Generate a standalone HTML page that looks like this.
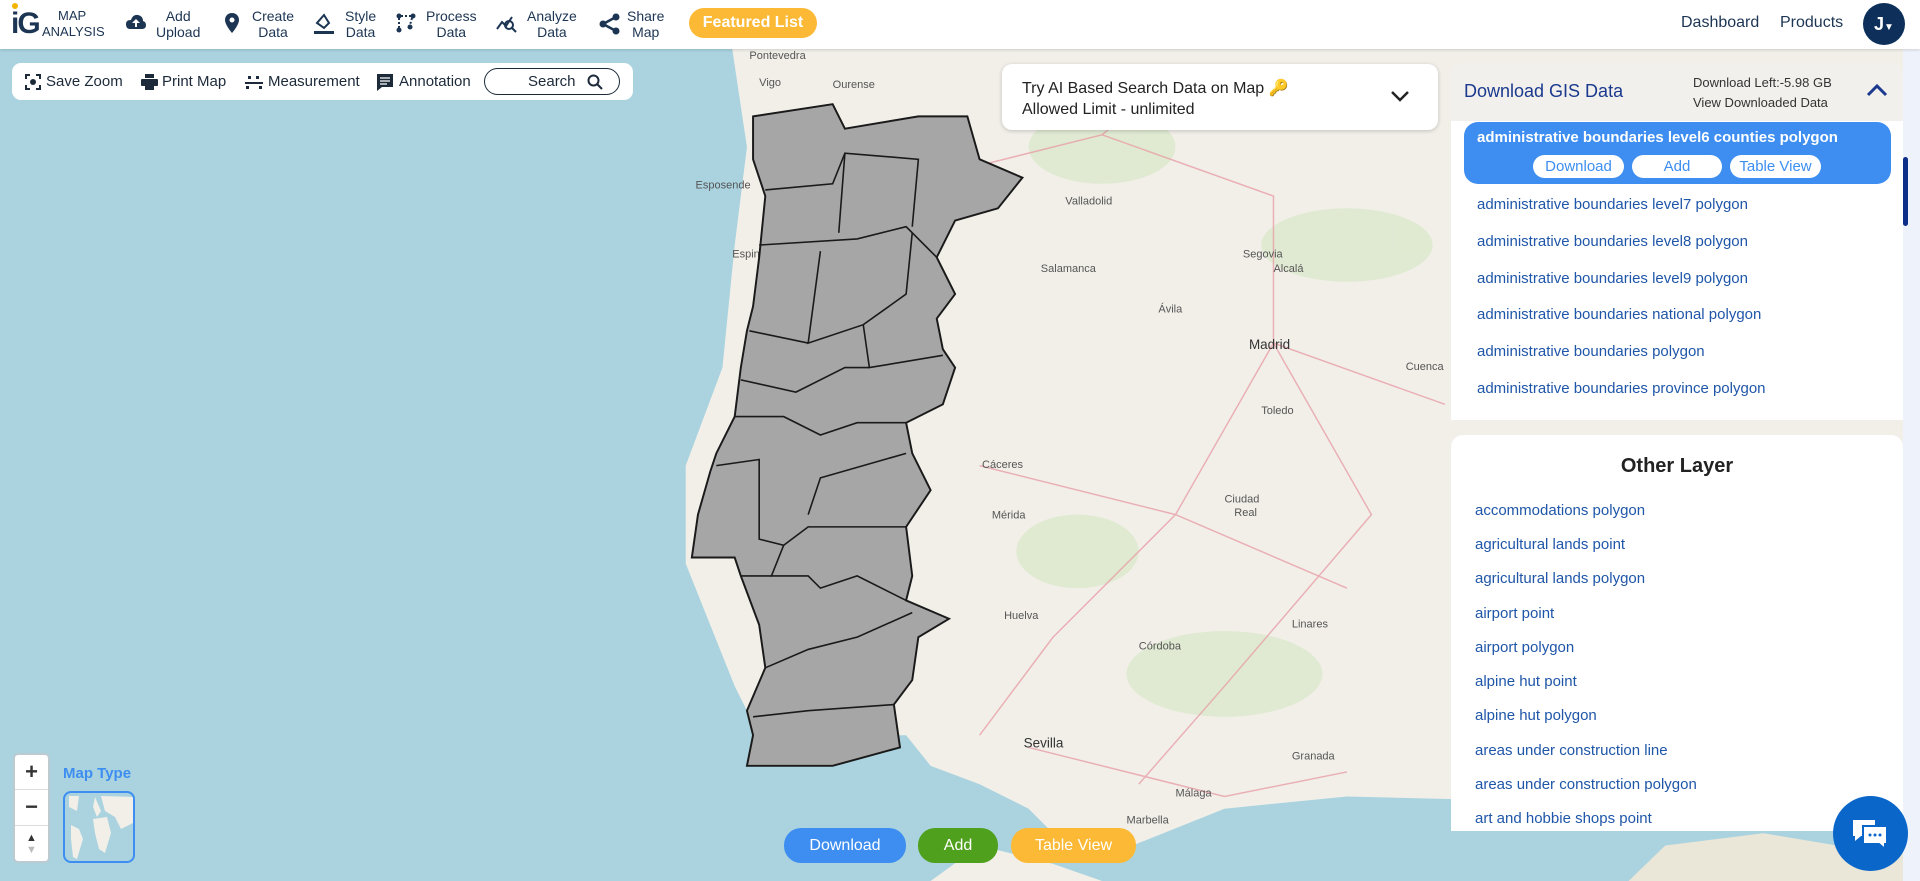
<!DOCTYPE html>
<html><head><meta charset="utf-8"><style>
*{margin:0;padding:0;box-sizing:border-box}
body{width:1920px;height:881px;overflow:hidden;position:relative;font-family:"Liberation Sans",sans-serif;background:#aad3df}
.abs{position:absolute}
#top{left:0;top:0;width:1920px;height:49px;background:#fff;box-shadow:0 1px 3px rgba(0,0,0,.15);z-index:5}
.nav{position:absolute;top:8px;font-size:14px;color:#1c3553;text-align:center;line-height:16px}
.ico{position:absolute;top:13px}
#feat{left:689px;top:8px;width:128px;height:30px;border-radius:15px;background:#fbb935;color:#fff;font-weight:bold;font-size:16px;line-height:30px;text-align:center}
#tools{left:12px;top:63px;width:621px;height:37px;background:#fff;border-radius:9px;font-size:15px;color:#1c2a3a}
#tools span{position:absolute;top:10px}
#ai{left:1002px;top:64px;width:436px;height:66px;background:#fff;border-radius:10px;box-shadow:0 1px 4px rgba(0,0,0,.2);font-size:16px;color:#222;padding:14px 20px;line-height:21px}
#dl{left:1451px;top:63px;width:452px;height:357px;background:#fff;border-radius:12px 12px 0 0}
#dlh{left:0;top:0;width:452px;height:58px;background:#f1f0ec;border-radius:12px 12px 0 0}
.it{position:absolute;left:26px;font-size:15px;color:#1f56a8}
#ol{left:1451px;top:435px;width:452px;height:396px;background:#fff;border-radius:12px 12px 0 0}
.ot{position:absolute;left:24px;font-size:15px;color:#1f56a8}
.bb{position:absolute;top:828px;height:35px;border-radius:17px;color:#fff;font-size:16px;line-height:35px;text-align:center}
</style></head><body>
<svg class="abs" style="left:0;top:0" width="1920" height="881" viewBox="0 0 1568 719" preserveAspectRatio="none">
<rect width="1568" height="719" fill="#aad3df"/>
<path d="M598 40 L1568 40 L1568 640 L1450 650 L1300 655 L1100 650 L1000 660 L950 680 L900 700 L870 690 L840 660 L800 640 L760 625 L740 600 L620 600 L600 560 L560 460 L560 380 L590 300 L600 200 L610 120 Z" fill="#f2efe9"/>
<path d="M760 719 L800 690 L860 705 L900 719 Z" fill="#f2efe9"/>
<path d="M1330 719 L1360 690 L1440 680 L1500 690 L1568 680 L1568 719Z" fill="#eae6d8"/>
<g fill="#d8e8c8" opacity=".7"><ellipse cx="900" cy="120" rx="60" ry="30"/><ellipse cx="1100" cy="200" rx="70" ry="30"/><ellipse cx="1000" cy="550" rx="80" ry="35"/><ellipse cx="1250" cy="120" rx="60" ry="25"/><ellipse cx="880" cy="450" rx="50" ry="30"/></g>
<g stroke="#e8a0a8" stroke-width="1.2" fill="none" opacity=".8"><path d="M780 140 L900 110 L1040 160 L1040 280 L1180 330"/><path d="M1040 280 L960 420 L860 520 L800 600"/><path d="M1040 280 L1120 420 L1000 560 L930 640"/><path d="M800 380 L960 420 L1100 480"/><path d="M900 110 L960 60 L1100 60"/><path d="M840 610 L1000 650 L1100 630"/></g>
<g font-size="9" fill="#555" font-family="Liberation Sans"><text x="612" y="48">Pontevedra</text><text x="620" y="70">Vigo</text><text x="680" y="72">Ourense</text><text x="568" y="154">Esposende</text><text x="598" y="210">Espinho</text><text x="870" y="167">Valladolid</text><text x="1015" y="210">Segovia</text><text x="1020" y="285" font-size="11" fill="#333">Madrid</text><text x="850" y="222">Salamanca</text><text x="946" y="255">Ávila</text><text x="1030" y="338">Toledo</text><text x="802" y="382">Cáceres</text><text x="810" y="423">Mérida</text><text x="1000" y="410">Ciudad</text><text x="1008" y="421">Real</text><text x="1055" y="512">Linares</text><text x="930" y="530">Córdoba</text><text x="836" y="610" font-size="11" fill="#333">Sevilla</text><text x="1055" y="620">Granada</text><text x="960" y="650">Málaga</text><text x="920" y="672">Marbella</text><text x="1148" y="302">Cuenca</text><text x="1040" y="222">Alcalá</text><text x="820" y="505">Huelva</text></g>
<path d="M615 95 L680 85 L690 105 L750 95 L790 95 L800 130 L835 145 L815 170 L780 180 L765 210 L780 240 L765 260 L770 285 L780 300 L770 330 L740 345 L745 370 L760 400 L740 430 L745 470 L740 490 L775 505 L750 520 L745 555 L730 575 L735 610 L680 625 L610 625 L615 600 L610 580 L625 545 L620 510 L605 470 L600 455 L565 455 L570 420 L580 385 L585 370 L600 340 L605 300 L610 270 L615 250 L620 210 L625 160 L615 130 Z" fill="#a6a6a6" stroke="#1a1a1a" stroke-width="1.6"/>
<g stroke="#1a1a1a" stroke-width="1.3" fill="none"><path d="M625 155 L680 150 L690 125 L750 130 L745 185"/><path d="M620 200 L700 195 L740 185 L765 210"/><path d="M690 125 L685 190"/><path d="M670 205 L660 280 L705 265 L740 240 L745 190"/><path d="M612 270 L660 280"/><path d="M705 265 L710 300 L770 290"/><path d="M605 310 L650 320 L690 300 L710 300"/><path d="M600 340 L640 340 L670 355 L700 345 L740 345"/><path d="M585 380 L620 375 L620 440 L640 445 L660 430 L700 430 L740 430"/><path d="M660 420 L670 390 L740 370"/><path d="M640 445 L630 470 L660 470 L670 480 L700 470 L740 490"/><path d="M605 470 L630 470"/><path d="M625 545 L660 530 L700 520 L745 500"/><path d="M615 585 L660 580 L730 575"/></g>
</svg>
<div class="abs" style="left:1903px;top:49px;width:17px;height:832px;background:#eef3fb"></div>
<div class="abs" id="top">
<div class="abs" style="left:11px;top:7px;font-size:30px;font-weight:bold;color:#1c3553;font-family:'Liberation Sans Narrow','Liberation Sans',sans-serif;line-height:34px;letter-spacing:-2px">iG</div>
<div class="abs" style="left:12px;top:3px;width:6px;height:6px;border-radius:3px;background:#f4b400"></div>
<div class="nav" style="left:42px;text-align:left;font-size:13px;line-height:16px"><span style="padding-left:16px">MAP</span><br>ANALYSIS</div>
<svg class="ico" style="left:126px" width="20" height="18"><path d="M4 16 Q0 16 0 11 Q0 7 5 7 Q7 1 12 2 Q17 3 17 8 Q20 9 20 12 Q20 16 16 16Z" fill="#1c3553"/><path d="M10 6 L6 10 H9 V14 H11 V10 H14Z" fill="#fff"/></svg>
<div class="nav" style="left:156px">Add<br>Upload</div>
<svg class="ico" style="left:225px" width="14" height="20"><path d="M7 0 C3 0 0 3 0 7 C0 12 7 20 7 20 C7 20 14 12 14 7 C14 3 11 0 7 0Z" fill="#1c3553"/><circle cx="7" cy="7" r="2.5" fill="#fff"/></svg>
<div class="nav" style="left:252px">Create<br>Data</div>
<svg class="ico" style="left:313px" width="22" height="22"><path d="M11 2 L4 10 L11 15 L16 10Z" fill="none" stroke="#1c3553" stroke-width="2"/><rect x="1" y="18" width="20" height="3" fill="#1c3553"/></svg>
<div class="nav" style="left:345px">Style<br>Data</div>
<svg class="ico" style="left:396px" width="20" height="20" fill="#1c3553"><circle cx="3" cy="3" r="2.5"/><circle cx="17" cy="3" r="2.5"/><circle cx="3" cy="17" r="2.5"/><circle cx="14" cy="14" r="2.5"/><path d="M3 5 V15 M5 3 H15 M16 5 L14 12" stroke="#1c3553" stroke-width="2" stroke-dasharray="2 2"/></svg>
<div class="nav" style="left:426px">Process<br>Data</div>
<svg class="ico" style="left:496px" width="22" height="20"><path d="M1 16 L6 9 L10 13 L16 4" fill="none" stroke="#1c3553" stroke-width="2"/><circle cx="13" cy="12" r="4" fill="none" stroke="#1c3553" stroke-width="2"/><path d="M16 15 L20 19" stroke="#1c3553" stroke-width="2"/></svg>
<div class="nav" style="left:527px">Analyze<br>Data</div>
<svg class="ico" style="left:599px" width="22" height="22" fill="#1c3553"><circle cx="17" cy="4" r="3.5"/><circle cx="4" cy="11" r="3.5"/><circle cx="17" cy="18" r="3.5"/><path d="M17 4 L4 11 L17 18" stroke="#1c3553" stroke-width="2.5" fill="none"/></svg>
<div class="nav" style="left:627px">Share<br>Map</div>
<div class="abs" id="feat">Featured List</div>
<div class="abs" style="left:1681px;top:14px;font-size:16px;color:#1c3553">Dashboard</div>
<div class="abs" style="left:1780px;top:14px;font-size:16px;color:#1c3553">Products</div>
<div class="abs" style="left:1863px;top:3px;width:42px;height:42px;border-radius:21px;background:#0d2f5a;color:#fff;font-size:18px;font-weight:bold;line-height:42px;padding-left:11px">J<span style="font-size:10px">▼</span></div>
</div>
<div class="abs" id="tools">
<svg class="abs" style="left:13px;top:11px" width="16" height="16"><path d="M1 5V1H5M11 1H15V5M15 11V15H11M5 15H1V11" stroke="#1c2a3a" stroke-width="2" fill="none"/><circle cx="8" cy="8" r="3" fill="#1c2a3a"/></svg>
<span style="left:34px">Save Zoom</span>
<svg class="abs" style="left:129px;top:11px" width="17" height="16" fill="#1c2a3a"><rect x="4" y="0" width="9" height="4"/><rect x="0" y="5" width="17" height="7" rx="1"/><rect x="4" y="10" width="9" height="6"/></svg>
<span style="left:150px">Print Map</span>
<svg class="abs" style="left:233px;top:11px" width="18" height="16" fill="#1c2a3a"><rect x="3" y="2" width="3" height="3"/><rect x="11" y="2" width="3" height="3"/><rect x="0" y="8" width="18" height="2"/><rect x="1" y="12" width="3" height="3"/><rect x="14" y="12" width="3" height="3"/></svg>
<span style="left:256px">Measurement</span>
<svg class="abs" style="left:365px;top:11px" width="16" height="17" fill="#1c2a3a"><path d="M0 0H16V13H5L0 17Z"/><path d="M3 4H13M3 7H13M3 10H10" stroke="#fff" stroke-width="1.3"/></svg>
<span style="left:387px">Annotation</span>
<div class="abs" style="left:472px;top:5px;width:136px;height:27px;border:1.5px solid #1c2a3a;border-radius:14px"><span style="left:43px;top:4px">Search</span><svg class="abs" style="left:102px;top:5px" width="16" height="16"><circle cx="6.5" cy="6.5" r="5" stroke="#1c2a3a" stroke-width="2" fill="none"/><path d="M10 10L15 15" stroke="#1c2a3a" stroke-width="2"/></svg></div>
</div>
<div class="abs" id="ai">Try AI Based Search Data on Map <span style="color:#e8c040">🔑</span><br>Allowed Limit - unlimited
<svg class="abs" style="left:388px;top:26px" width="20" height="12"><path d="M2 2L10 10L18 2" stroke="#222" stroke-width="2.5" fill="none"/></svg></div>
<div class="abs" id="dl">
<div class="abs" id="dlh"></div>
<div class="abs" style="left:13px;top:18px;font-size:18px;color:#1b3a8f">Download GIS Data</div>
<div class="abs" style="left:242px;top:10px;font-size:13px;color:#333;line-height:20px">Download Left:-5.98 GB<br>View Downloaded Data</div>
<svg class="abs" style="left:415px;top:20px" width="22" height="14"><path d="M2 12L11 3L20 12" stroke="#1b3a8f" stroke-width="3" fill="none"/></svg>
<div class="abs" style="left:13px;top:59px;width:427px;height:62px;background:#3d8ef0;border-radius:14px">
<div class="abs" style="left:13px;top:7px;font-size:15px;font-weight:bold;color:#fff">administrative boundaries level6 counties polygon</div>
<div class="abs" style="left:69px;top:33px;width:91px;height:23px;background:#fff;border-radius:12px;color:#3d8ef0;font-size:15px;text-align:center;line-height:23px">Download</div>
<div class="abs" style="left:168px;top:33px;width:90px;height:23px;background:#fff;border-radius:12px;color:#3d8ef0;font-size:15px;text-align:center;line-height:23px">Add</div>
<div class="abs" style="left:266px;top:33px;width:91px;height:23px;background:#fff;border-radius:12px;color:#3d8ef0;font-size:15px;text-align:center;line-height:23px">Table View</div>
</div>
<div class="it" style="top:133px">administrative boundaries level7 polygon</div>
<div class="it" style="top:170px">administrative boundaries level8 polygon</div>
<div class="it" style="top:207px">administrative boundaries level9 polygon</div>
<div class="it" style="top:243px">administrative boundaries national polygon</div>
<div class="it" style="top:280px">administrative boundaries polygon</div>
<div class="it" style="top:317px">administrative boundaries province polygon</div>
</div>
<div class="abs" style="left:1903px;top:157px;width:5px;height:69px;background:#0d2f8a;border-radius:3px"></div>
<div class="abs" id="ol">
<div class="abs" style="left:0;width:452px;top:20px;text-align:center;font-size:20px;font-weight:bold;color:#222">Other Layer</div>
<div class="ot" style="top:67px">accommodations polygon</div>
<div class="ot" style="top:101px">agricultural lands point</div>
<div class="ot" style="top:135px">agricultural lands polygon</div>
<div class="ot" style="top:170px">airport point</div>
<div class="ot" style="top:204px">airport polygon</div>
<div class="ot" style="top:238px">alpine hut point</div>
<div class="ot" style="top:272px">alpine hut polygon</div>
<div class="ot" style="top:307px">areas under construction line</div>
<div class="ot" style="top:341px">areas under construction polygon</div>
<div class="ot" style="top:375px">art and hobbie shops point</div>
</div>
<div class="bb" style="left:784px;width:122px;background:#3d8ef0">Download</div>
<div class="bb" style="left:918px;width:80px;background:#4fa01c">Add</div>
<div class="bb" style="left:1011px;width:125px;background:#fbb935">Table View</div>
<div class="abs" style="left:13px;top:753px;width:37px;height:110px;background:#fff;border-radius:5px;border:2px solid #bccbd0;font-size:22px;font-weight:bold;color:#333;text-align:center">
<div style="height:35px;line-height:34px;border-bottom:1px solid #ddd">+</div><div style="height:36px;line-height:34px;border-bottom:1px solid #ddd">−</div><div style="font-size:11px;line-height:12px;padding-top:6px">▲<br><span style="color:#bbb">▼</span></div></div>
<div class="abs" style="left:63px;top:765px;font-size:15px;font-weight:bold;color:#3d8ef0">Map Type</div>
<div class="abs" style="left:63px;top:791px;width:72px;height:72px;border:2px solid #3d8ef0;border-radius:8px;background:#aad3df;overflow:hidden">
<svg width="72" height="72"><path d="M4 3 L14 3 L12 18 L4 14Z M30 4 L36 18 L32 24 L28 14Z M28 26 L42 24 L46 40 L40 60 L34 56 L30 40Z M36 3 L70 4 L68 30 L56 36 L50 24 L40 18Z M6 32 L14 36 L18 46 L12 66 L8 64 L6 46Z" fill="#f2efe9"/></svg></div>
<div class="abs" style="left:1833px;top:796px;width:75px;height:75px;border-radius:38px;background:#0a66c8">
<svg class="abs" style="left:18px;top:22px" width="40" height="32"><path d="M2 2H24V18H10L4 23V18H2Z" fill="#fff"/><path d="M12 8H36V26H34V31L28 26H12Z" fill="#fff" stroke="#0a66c8" stroke-width="2"/><circle cx="19" cy="17" r="1.5" fill="#0a66c8"/><circle cx="24" cy="17" r="1.5" fill="#0a66c8"/><circle cx="29" cy="17" r="1.5" fill="#0a66c8"/></svg></div>
</body></html>
